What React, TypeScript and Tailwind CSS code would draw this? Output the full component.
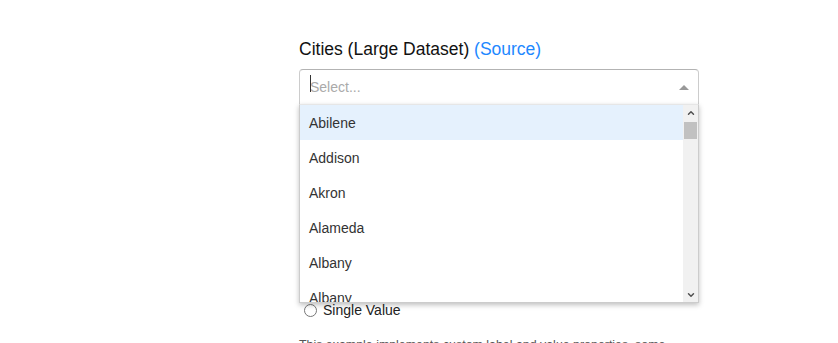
import { ChevronUp, ChevronDown } from 'lucide-react';

const cities = ['Abilene', 'Addison', 'Akron', 'Alameda', 'Albany', 'Albany'];

function CitySelect() {
    return (
        <div className="relative mt-[10px]">
            {/* Control */}
            <div className="h-[36px] flex items-center bg-white border border-[#ccc] border-t-[#b3b3b3] border-b-[#d9d9d9] rounded-t-[4px]">
                <div className="relative flex-1 pl-[10px] pt-[1px] text-[14px] text-[#aaa]">
                    <span className="absolute left-[10px] top-[-1px] w-[1px] h-[17px] bg-[#333]" />
                    Select...
                </div>
                <div className="w-[25px] mr-[2px] flex items-center justify-center">
                    <span className="w-0 h-0 border-x-[5px] border-x-transparent border-b-[5px] border-b-[#999]" />
                </div>
            </div>

            {/* Menu */}
            <div className="absolute z-10 left-0 right-0 top-[35px] h-[199px] flex bg-white border border-[#ccc] border-t-[#e6e6e6] shadow-[0_2px_5px_rgba(0,0,0,0.25)]">
                <div className="flex-1 overflow-hidden">
                    {cities.map((city, i) => (
                        <div
                            key={i}
                            className={`h-[35px] pl-[9px] pt-[2px] flex items-center text-[14px] text-[#333] ${i === 0 ? 'bg-[#e5f1fd]' : ''}`}
                        >
                            {city}
                        </div>
                    ))}
                </div>
                <div className="w-[15px] bg-[#f1f1f1] flex flex-col">
                    <div className="h-[15px] flex items-center justify-center">
                        <ChevronUp size={10} strokeWidth={3.5} className="text-[#505050]" />
                    </div>
                    <div className="mt-[2px] mx-[1px] h-[17px] bg-[#c1c1c1]" />
                    <div className="flex-1" />
                    <div className="h-[15px] flex items-center justify-center">
                        <ChevronDown size={10} strokeWidth={3.5} className="text-[#505050]" />
                    </div>
                </div>
            </div>
        </div>
    );
}

export default function App() {
    return (
        <div className="h-[343px] overflow-hidden bg-white font-['Liberation_Sans',Arial,sans-serif]">
            <div className="pl-[299px] pt-[39px] w-[699px]">
                <h2 className="text-[17.5px] leading-[20px] text-[#111]">
                    Cities (Large Dataset) <a className="text-[#1e88ff]">(Source)</a>
                </h2>

                <CitySelect />

                {/* options sit under the open menu */}
                <div className="mt-[195px]">
                    <label className="h-[20px] pt-[1px] flex items-center text-[14px] text-[#222]">
                        <span className="ml-[5px] mr-[6px] w-[13px] h-[13px] rounded-full border border-[#767676] bg-white" />
                        Single Value
                    </label>
                </div>

                <p className="mt-[16px] text-[12.4px] leading-[18px] text-[#555]">
                    This example implements custom label and value properties, some custom styles and a custom option renderer.
                </p>
            </div>
        </div>
    );
}
